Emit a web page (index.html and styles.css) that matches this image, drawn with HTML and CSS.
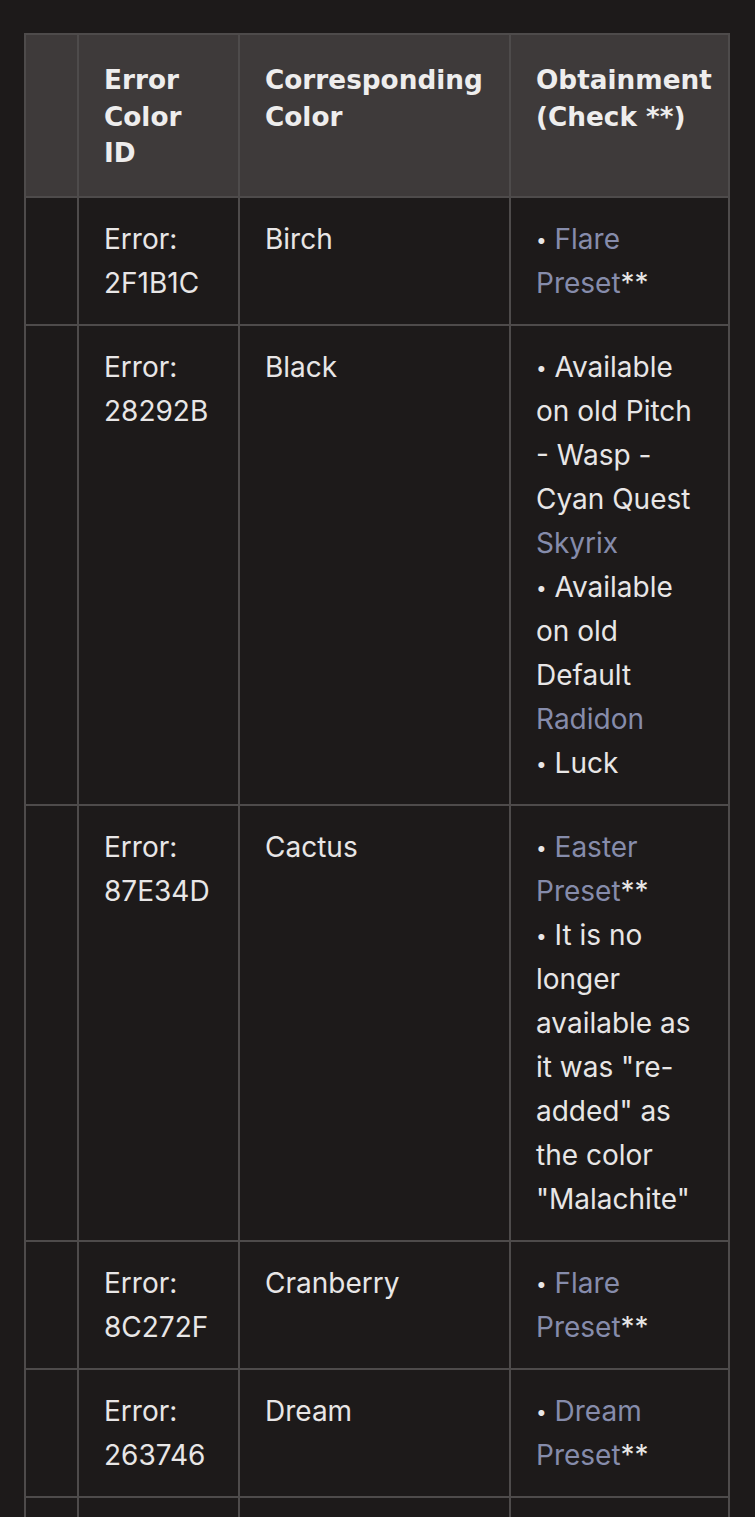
FILE: index.html
```html
<!DOCTYPE html>
<html>
<head>
<meta charset="utf-8">
<link rel="stylesheet" href="styles.css">
</head>
<body>
<div class="wrap">
<table class="colors">
<colgroup>
<col class="c1"><col class="c2"><col class="c3"><col class="c4">
</colgroup>
<thead>
<tr>
<th></th>
<th>Error Color ID</th>
<th>Corresponding Color</th>
<th>Obtainment (Check **)</th>
</tr>
</thead>
<tbody>
<tr>
<td></td>
<td>Error: 2F1B1C</td>
<td>Birch</td>
<td><span class="b">•</span> <a class="lnk">Flare Preset</a>**</td>
</tr>
<tr>
<td></td>
<td>Error: 28292B</td>
<td>Black</td>
<td><span class="b">•</span> Available on old Pitch - Wasp - Cyan Quest <a class="lnk">Skyrix</a><br><span class="b">•</span> Available on old Default <a class="lnk">Radidon</a><br><span class="b">•</span> Luck</td>
</tr>
<tr>
<td></td>
<td>Error: 87E34D</td>
<td>Cactus</td>
<td><span class="b">•</span> <a class="lnk">Easter Preset</a>**<br><span class="b">•</span> It is no longer available as it was "re-added" as the color "Malachite"</td>
</tr>
<tr>
<td></td>
<td>Error: 8C272F</td>
<td>Cranberry</td>
<td><span class="b">•</span> <a class="lnk">Flare Preset</a>**</td>
</tr>
<tr>
<td></td>
<td>Error: 263746</td>
<td>Dream</td>
<td><span class="b">•</span> <a class="lnk">Dream Preset</a>**</td>
</tr>
<tr>
<td></td>
<td>Error: 5B4B3C</td>
<td>Earth</td>
<td><span class="b">•</span> Luck</td>
</tr>
</tbody>
</table>
</div>
</body>
</html>
```

FILE: styles.css
```css
html, body {
  margin: 0;
  padding: 0;
  background: #1d1a1a;
}
.wrap {
  padding: 33px 26px 40px 24px;
}
.colors {
  border-collapse: collapse;
  width: 704px;
  table-layout: fixed;
  font-family: Inter, "Liberation Sans", sans-serif;
  color: #e8e6e6;
}
.c1 { width: 53px; }
.c2 { width: 161px; }
.c3 { width: 271px; }
.c4 { width: 219px; }
.colors th, .colors td {
  border: 2px solid #4e4b4b;
  text-align: left;
  vertical-align: top;
}
.colors th {
  background: #3e3a3a;
  font-family: "DejaVu Sans", sans-serif;
  font-weight: bold;
  font-size: 26.3px;
  line-height: 36.5px;
  padding: 27px 20px 24px 25px;
  color: #eeeded;
}
.colors td {
  font-size: 28px;
  line-height: 44px;
  padding: 19px 20px 19px 25px;
}
.b {
  font-size: 19px;
  line-height: 0;
  vertical-align: 2px;
}
.lnk {
  color: #868cab;
  text-decoration: none;
}
```
